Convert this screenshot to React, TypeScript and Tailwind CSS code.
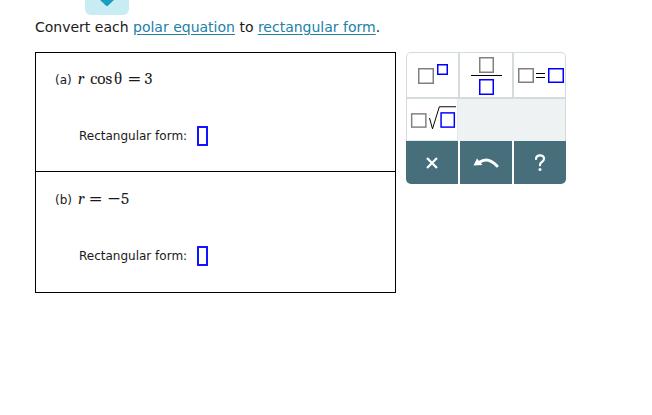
import React from "react";

function SupIcon() {
  return (
    <svg width="51" height="44" viewBox="0 0 51 44">
      <rect x="11.75" y="15.75" width="14.5" height="14.5" fill="none" stroke="#808080" strokeWidth="1.5" />
      <rect x="30.75" y="11.75" width="9.5" height="9.5" fill="none" stroke="#0000ff" strokeWidth="1.5" />
    </svg>
  );
}

function FracIcon() {
  return (
    <svg width="51" height="44" viewBox="0 0 51 44">
      <rect x="19.75" y="4.75" width="13.5" height="14.5" fill="none" stroke="#808080" strokeWidth="1.5" />
      <line x1="11" y1="22.5" x2="42" y2="22.5" stroke="#000" strokeWidth="1" />
      <rect x="19.75" y="26.75" width="13.5" height="14.5" fill="none" stroke="#0000ff" strokeWidth="1.5" />
    </svg>
  );
}

function EqIcon() {
  return (
    <svg width="51" height="44" viewBox="0 0 51 44">
      <rect x="4.75" y="15.75" width="14.5" height="13.5" fill="none" stroke="#808080" strokeWidth="1.5" />
      <line x1="22" y1="20.5" x2="31" y2="20.5" stroke="#000" strokeWidth="1.2" />
      <line x1="22" y1="24.5" x2="31" y2="24.5" stroke="#000" strokeWidth="1.2" />
      <rect x="34.75" y="15.75" width="14.5" height="13.5" fill="none" stroke="#0000ff" strokeWidth="1.5" />
    </svg>
  );
}

function SqrtIcon() {
  return (
    <svg width="51" height="42" viewBox="0 0 51 42">
      <rect x="4.75" y="14.75" width="14.5" height="13.5" fill="none" stroke="#808080" strokeWidth="1.5" />
      <polyline points="23,19 26,30 33,7.5 50,7.5" fill="none" stroke="#000" strokeWidth="1" />
      <rect x="34.75" y="13.75" width="13.5" height="14.5" fill="none" stroke="#0000ff" strokeWidth="1.5" />
    </svg>
  );
}

function XIcon() {
  return (
    <svg width="12" height="12" viewBox="0 0 12 12">
      <line x1="1" y1="1" x2="11" y2="11" stroke="#fff" strokeWidth="2.2" />
      <line x1="11" y1="1" x2="1" y2="11" stroke="#fff" strokeWidth="2.2" />
    </svg>
  );
}

function UndoIcon() {
  return (
    <svg width="26" height="12" viewBox="0 0 26 12">
      <path d="M6 5.5 Q15 -1 24 9" fill="none" stroke="#fff" strokeWidth="3" strokeLinecap="round" />
      <path d="M0.5 8.5 L4 1.5 L9.5 8 Z" fill="#fff" />
    </svg>
  );
}

function QIcon() {
  return (
    <svg width="12" height="18" viewBox="0 0 12 18">
      <path d="M2 5 Q2 1.3 6 1.3 Q10 1.3 10 4.8 Q10 7 7.6 8.2 Q6 9 6 11.3" fill="none" stroke="#fff" strokeWidth="2.2" strokeLinecap="round" />
      <circle cx="6" cy="15.6" r="1.5" fill="#fff" />
    </svg>
  );
}

function InputBox() {
  return <div className="ml-[10px] w-[11px] h-[20px] border-2 border-[#1414ff]" />;
}

export default function App() {
  return (
    <div className="w-[652px] h-[415px] bg-white text-[#1a1a1a] font-[DejaVu_Sans,sans-serif] overflow-hidden">
      <div className="ml-[85px] w-[44px] h-[15px] rounded-b-[6px] bg-[#c8ecf3]">
        <svg width="44" height="15" viewBox="0 0 44 15">
          <path d="M15 0 L29 0 L23.2 5.5 Q22 6.5 20.8 5.5 Z" fill="#1b9cc1" />
        </svg>
      </div>
      <div className="pl-[35px]">
        <p className="mt-[3px] text-[14px] leading-[18px]">
          Convert each{" "}
          <span className="text-[#2081a9] underline underline-offset-[2px]">polar equation</span> to{" "}
          <span className="text-[#2081a9] underline underline-offset-[2px]">rectangular form</span>.
        </p>
        <div className="mt-[16px] flex items-start">
          <div className="w-[361px] border border-black">
            <div className="h-[119px] border-b border-black">
              <div className="pl-[19px] pt-[15px] h-[35px] flex items-baseline leading-[20px]">
                <span className="text-[12px]">(a)</span>
                <span className="ml-[6px] font-serif text-[17px] italic">r</span>
                <span className="ml-[6px] font-serif text-[17px]">cos</span>
                <span className="ml-[2px] font-serif text-[17px]">θ</span>
                <span className="ml-[5px] font-[DejaVu_Serif,serif] text-[17px]">=</span>
                <span className="ml-[3px] font-serif text-[17px]">3</span>
              </div>
              <div className="mt-[38px] pl-[43px] h-[20px] flex items-center">
                <span className="text-[12px] leading-[20px]">Rectangular form:</span>
                <InputBox />
              </div>
            </div>
            <div className="h-[120px]">
              <div className="pl-[19px] pt-[16px] h-[36px] flex items-baseline leading-[20px]">
                <span className="text-[12px]">(b)</span>
                <span className="ml-[6px] font-serif text-[17px] italic">r</span>
                <span className="ml-[4px] font-[DejaVu_Serif,serif] text-[17px]">=</span>
                <span className="ml-[4px] font-[DejaVu_Serif,serif] text-[17px]">−</span>
                <span className="ml-0 font-serif text-[17px]">5</span>
              </div>
              <div className="mt-[38px] pl-[43px] h-[20px] flex items-center">
                <span className="text-[12px] leading-[20px]">Rectangular form:</span>
                <InputBox />
              </div>
            </div>
          </div>
          <div className="ml-[10px] w-[160px]">
            <div className="rounded-t-[5px] border-x border-t border-[#d3dbde] bg-[#eef2f3] overflow-hidden">
              <div className="grid grid-cols-3 gap-[2px] bg-[#d3dbde]">
                <div className="h-[44px] bg-white flex items-center justify-center"><SupIcon /></div>
                <div className="h-[44px] bg-white flex items-center justify-center"><FracIcon /></div>
                <div className="h-[44px] bg-white flex items-center justify-center"><EqIcon /></div>
              </div>
              <div className="flex h-[44px] border-t-2 border-[#d3dbde]">
                <div className="w-[51px] h-[42px] bg-white border-r border-b border-[#e3e8ea] flex items-center justify-center"><SqrtIcon /></div>
                <div className="flex-1" />
              </div>
            </div>
            <div className="grid grid-cols-3 gap-[2px] h-[43px] rounded-b-[5px] overflow-hidden bg-white">
              <div className="bg-[#476f7b] flex items-center justify-center"><XIcon /></div>
              <div className="bg-[#476f7b] flex items-center justify-center"><UndoIcon /></div>
              <div className="bg-[#476f7b] flex items-center justify-center"><QIcon /></div>
            </div>
          </div>
        </div>
      </div>
    </div>
  );
}
